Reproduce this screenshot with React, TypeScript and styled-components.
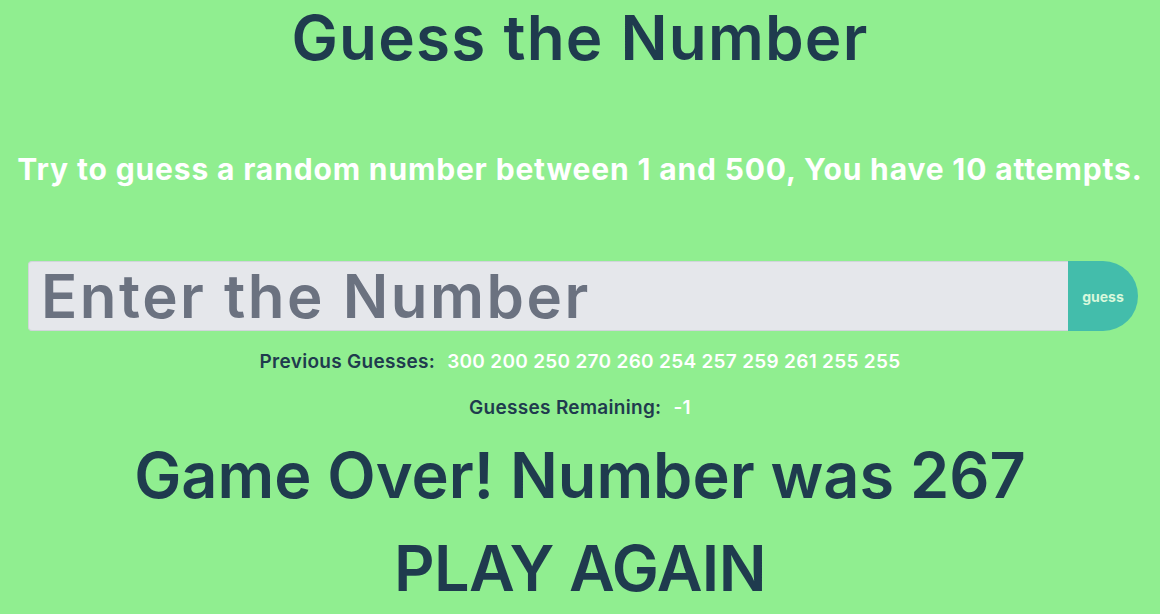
import React from 'react'
import styled, { createGlobalStyle } from 'styled-components'

const GlobalStyle = createGlobalStyle`
  * {
    box-sizing: border-box;
  }

  body {
    margin: 0;
    background-color: #90ee90;
    font-family: Inter, "Open Sans", sans-serif;
    color: #1f3b4e;
  }
`

const Page = styled.main`
  display: flex;
  flex-direction: column;
  align-items: center;
  width: 1160px;
  overflow: hidden;
`

const Title = styled.h1`
  margin: 0;
  font-size: 62px;
  line-height: 76px;
  font-weight: 600;
  letter-spacing: 1.2px;
`

const Intro = styled.p`
  margin: 75px 0 0;
  font-size: 30px;
  line-height: 36px;
  font-weight: 700;
  letter-spacing: 0.85px;
  color: #ffffff;
  white-space: nowrap;
`

const GuessForm = styled.form`
  display: flex;
  width: 1110px;
  height: 70px;
  margin: 74px 22px 0 28px;
  align-self: flex-start;
`

const NumberInput = styled.input`
  flex: 1;
  min-width: 0;
  height: 100%;
  border: 1px solid #d1d5db;
  border-right: none;
  border-radius: 4px 0 0 4px;
  background-color: #e5e7eb;
  padding: 0 12px;
  font-family: inherit;
  font-size: 60px;
  font-weight: 600;
  letter-spacing: 2.5px;
  color: #374151;

  &::placeholder {
    color: #6b7280;
  }
`

const GuessButton = styled.button`
  width: 70px;
  height: 100%;
  border: none;
  border-radius: 0 35px 35px 0;
  background-color: #43bdab;
  color: #d8f8dc;
  font-family: inherit;
  font-size: 14px;
  font-weight: 700;
  cursor: pointer;
`

const InfoLine = styled.p<{ $top: number }>`
  display: flex;
  gap: 12px;
  margin: ${({ $top }) => $top}px 0 0;
  font-size: 19px;
  line-height: 24px;
  font-weight: 600;
  letter-spacing: 0.3px;
`

const InfoValue = styled.span`
  color: #ffffff;
`

const Result = styled.h2`
  margin: 17px 0 0;
  font-size: 63px;
  line-height: 76px;
  font-weight: 600;
`

const PlayAgain = styled.button`
  margin: 17px 0 0;
  padding: 0;
  border: none;
  background: none;
  font-family: inherit;
  font-size: 63px;
  line-height: 76px;
  font-weight: 600;
  letter-spacing: -0.6px;
  color: inherit;
  cursor: pointer;
`

const previousGuesses = [300, 200, 250, 270, 260, 254, 257, 259, 261, 255, 255]

function App() {
  return (
    <>
      <GlobalStyle />
      <Page>
        <Title>Guess the Number</Title>
        <Intro>Try to guess a random number between 1 and 500, You have 10 attempts.</Intro>

        <GuessForm onSubmit={e => e.preventDefault()}>
          <NumberInput type='number' placeholder='Enter the Number' />
          <GuessButton type='submit'>guess</GuessButton>
        </GuessForm>

        <InfoLine $top={19}>
          Previous Guesses:
          <InfoValue>{previousGuesses.join(' ')}</InfoValue>
        </InfoLine>
        <InfoLine $top={22}>
          Guesses Remaining:
          <InfoValue>-1</InfoValue>
        </InfoLine>

        <Result>Game Over! Number was 267</Result>
        <PlayAgain type='button'>PLAY AGAIN</PlayAgain>
      </Page>
    </>
  )
}

export default App
